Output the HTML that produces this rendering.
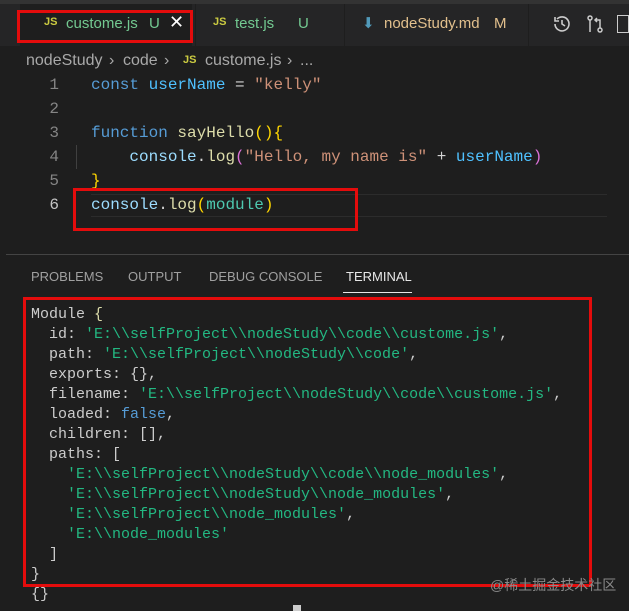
<!DOCTYPE html>
<html><head><meta charset="utf-8"><style>
*{margin:0;padding:0;box-sizing:border-box}
body{width:629px;height:609px;background:#1e1e1e;position:relative;overflow:hidden;font-family:"Liberation Sans",sans-serif}
.abs{position:absolute;white-space:pre}
.mono{font-family:"Liberation Mono",monospace}
.ed{font-size:16px;line-height:24px}
.tm{font-size:15px;line-height:20px;color:#cccccc}
.s{color:#23b882}
.k{color:#569cd6}.v{color:#9cdcfe}.f{color:#dcdcaa}.st{color:#ce9178}.y{color:#ffd700}.p{color:#da70d6}.t{color:#4ec9b0}.c{color:#d4d4d4}
.box{position:absolute;border:3px solid #e40c0c}
.bc{position:absolute;top:52px;font-size:16px;color:#a9a9a9;white-space:pre}
</style></head><body>
<div class="abs" style="left:0;top:0;width:629px;height:46px;background:#252526"></div>
<div class="abs" style="left:0;top:0;width:629px;height:4px;background:#333"></div>
<div class="abs" style="left:20px;top:4px;width:172px;height:42px;background:#1e1e1e"></div>
<div class="abs" style="left:195px;top:4px;width:1px;height:42px;background:#1e1e1e"></div>
<div class="abs" style="left:344px;top:4px;width:1px;height:42px;background:#1e1e1e"></div>
<div class="abs" style="left:528px;top:4px;width:1px;height:42px;background:#1e1e1e"></div>
<div class="abs" style="left:44px;top:16px;font-size:11px;font-weight:bold;color:#cbcb41">JS</div>
<div class="abs" style="left:66px;top:15px;font-size:15px;color:#73c991">custome.js</div>
<div class="abs" style="left:149px;top:15px;font-size:15px;color:#73c991">U</div>
<div class="abs" style="left:169px;top:12px;font-size:18px;color:#fff">✕</div>
<div class="abs" style="left:213px;top:16px;font-size:11px;font-weight:bold;color:#cbcb41">JS</div>
<div class="abs" style="left:235px;top:15px;font-size:15px;color:#73c991">test.js</div>
<div class="abs" style="left:298px;top:15px;font-size:15px;color:#73c991">U</div>
<div class="abs" style="left:362px;top:14px;font-size:15px;color:#519aba">⬇</div>
<div class="abs" style="left:384px;top:15px;font-size:15px;color:#e2c08d">nodeStudy.md</div>
<div class="abs" style="left:494px;top:15px;font-size:15px;color:#e2c08d">M</div>
<svg class="abs" style="left:552px;top:14px" width="20" height="20" viewBox="0 0 20 20" fill="none" stroke="#ccc" stroke-width="1.6"><path d="M3 10a7 7 0 1 0 2-5M3 3v4h4M10 6v4l3 2"/></svg>
<svg class="abs" style="left:585px;top:14px" width="20" height="20" viewBox="0 0 20 20" fill="none" stroke="#ccc" stroke-width="1.5"><circle cx="5" cy="4" r="2"/><circle cx="15" cy="16" r="2"/><path d="M5 6v12M15 14V6h-5M12 4l-2 2 2 2"/></svg>
<div class="abs" style="left:617px;top:15px;width:12px;height:18px;border:1.5px solid #ccc"></div>
<div class="box" style="left:17px;top:10px;width:176px;height:33px"></div>

<div class="bc" style="left:26px">nodeStudy</div>
<div class="bc" style="left:109px">›</div>
<div class="bc" style="left:123px">code</div>
<div class="bc" style="left:164px">›</div>
<div class="abs" style="left:183px;top:54px;font-size:11px;font-weight:bold;color:#cbcb41">JS</div>
<div class="bc" style="left:205px">custome.js</div>
<div class="bc" style="left:287px">›</div>
<div class="bc" style="left:300px">...</div>

<div class="abs mono ed" style="left:30px;top:73px;color:#858585;text-align:right;width:29px">1
2
3
4
5
<span style="color:#c6c6c6">6</span></div>
<div class="abs" style="left:76px;top:145px;width:1px;height:24px;background:#404040"></div>
<div class="abs" style="left:91px;top:216px;width:516px;height:1px;background:#2c2c2c"></div>
<div class="abs" style="left:91px;top:194px;width:516px;height:1px;background:#2c2c2c"></div>
<div class="abs mono ed" style="left:91px;top:73px"><span class="k">const</span> <span class="v" style="color:#4fc1ff">userName</span> <span class="c">=</span> <span class="st">"kelly"</span>

<span class="k">function</span> <span class="f">sayHello</span><span class="y">(){</span>
    <span class="v">console</span><span class="c">.</span><span class="f">log</span><span class="p">(</span><span class="st">"Hello, my name is"</span> <span class="c">+</span> <span style="color:#4fc1ff">userName</span><span class="p">)</span>
<span class="y">}</span>
<span class="v">console</span><span class="c">.</span><span class="f">log</span><span class="y">(</span><span class="t">module</span><span class="y">)</span></div>
<div class="box" style="left:73px;top:188px;width:285px;height:43px"></div>

<div class="abs" style="left:6px;top:254px;width:623px;height:1px;background:#444"></div>
<div class="abs" style="left:31px;top:269px;font-size:13px;color:#a0a0a0">PROBLEMS</div>
<div class="abs" style="left:128px;top:269px;font-size:13px;color:#a0a0a0">OUTPUT</div>
<div class="abs" style="left:209px;top:269px;font-size:13px;color:#a0a0a0">DEBUG CONSOLE</div>
<div class="abs" style="left:346px;top:269px;font-size:13px;color:#e7e7e7">TERMINAL</div>
<div class="abs" style="left:343px;top:292px;width:69px;height:1px;background:#e7e7e7"></div>

<div class="abs mono tm" style="left:31px;top:305px">Module <span class="f">{</span>
  id: <span class="s">'E:\\selfProject\\nodeStudy\\code\\custome.js'</span>,
  path: <span class="s">'E:\\selfProject\\nodeStudy\\code'</span>,
  exports: {},
  filename: <span class="s">'E:\\selfProject\\nodeStudy\\code\\custome.js'</span>,
  loaded: <span class="k">false</span>,
  children: [],
  paths: [
    <span class="s">'E:\\selfProject\\nodeStudy\\code\\node_modules'</span>,
    <span class="s">'E:\\selfProject\\nodeStudy\\node_modules'</span>,
    <span class="s">'E:\\selfProject\\node_modules'</span>,
    <span class="s">'E:\\node_modules'</span>
  ]
}
{}</div>
<div class="abs" style="left:293px;top:605px;width:8px;height:6px;background:#ccc"></div>
<div class="box" style="left:23px;top:297px;width:569px;height:290px"></div>
<div class="abs" style="left:490px;top:575px;font-size:14px;color:#8a8a8a;font-family:'Liberation Sans','Noto Sans CJK SC',sans-serif">@稀土掘金技术社区</div>
</body></html>
